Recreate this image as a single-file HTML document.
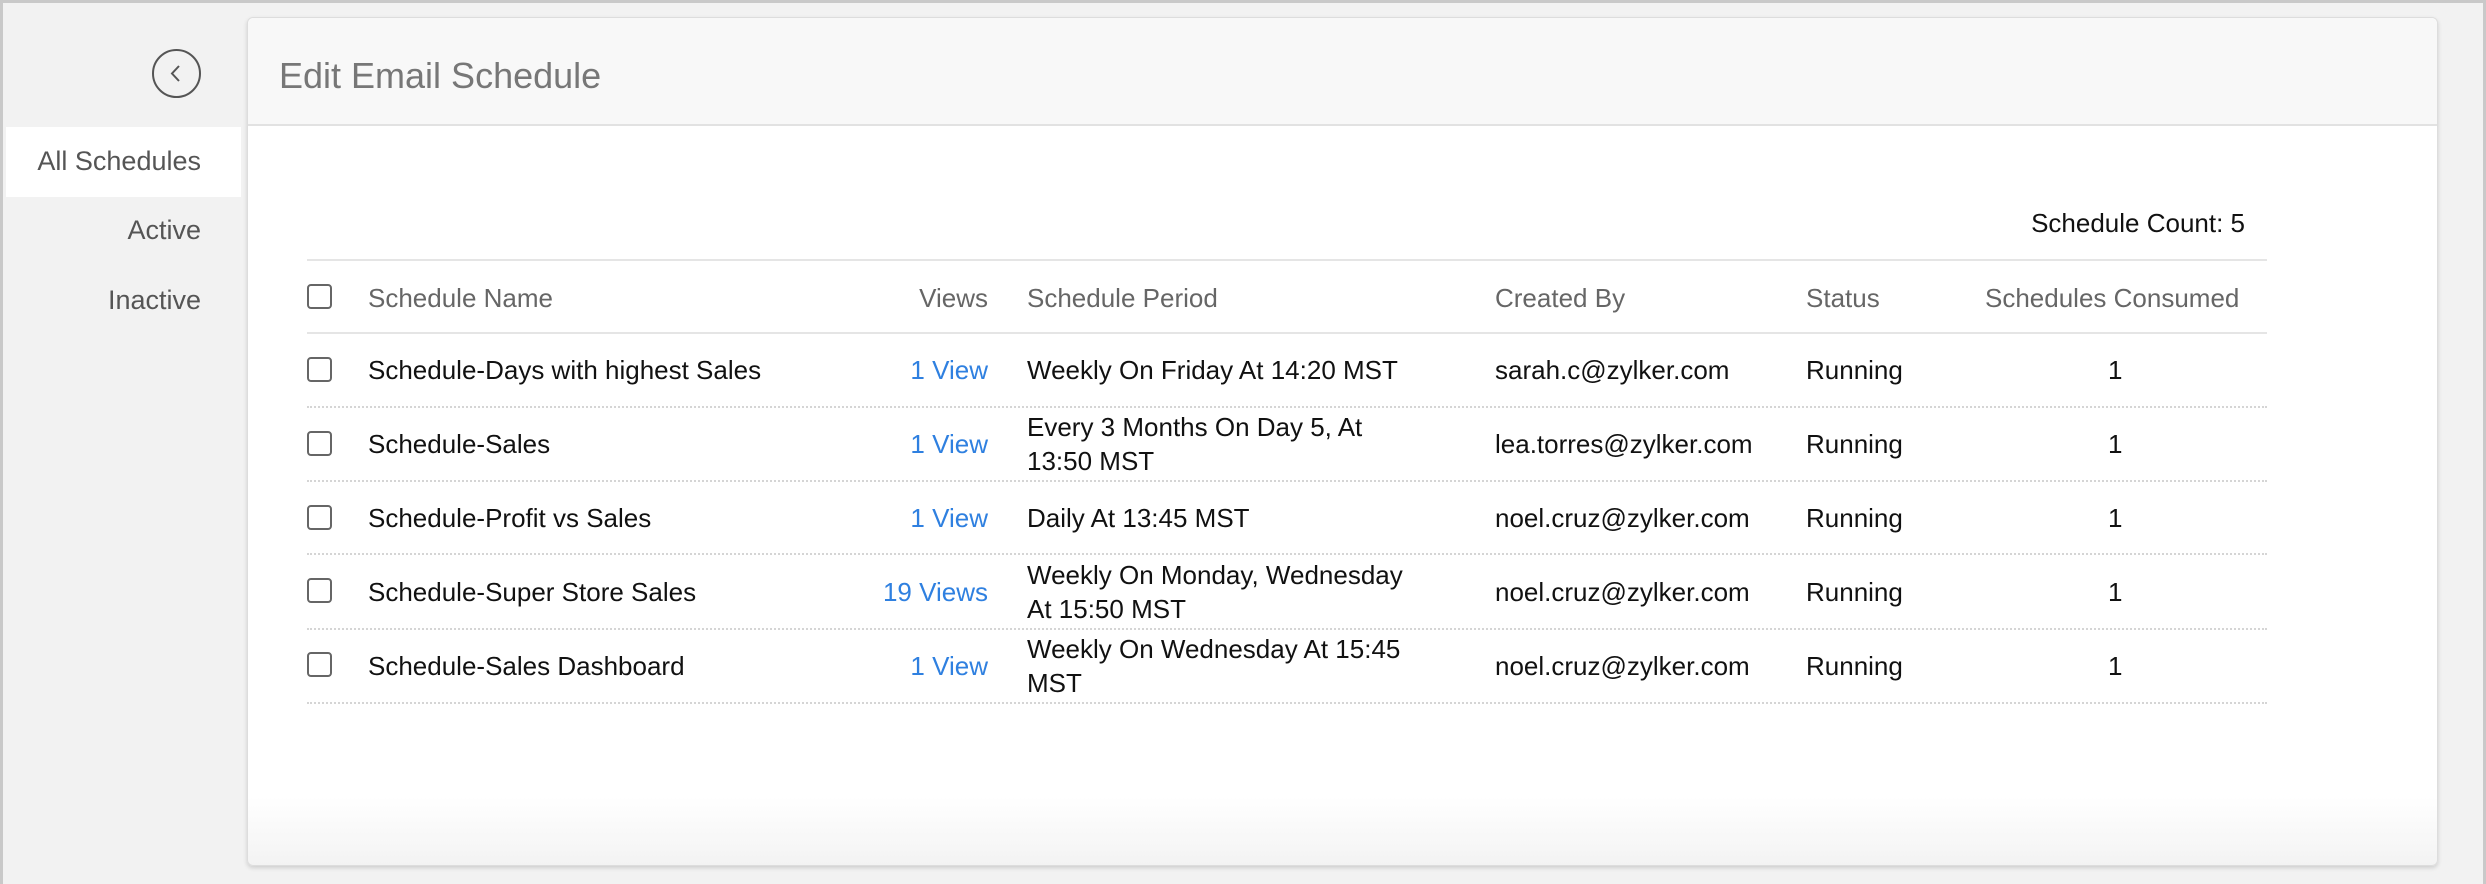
<!DOCTYPE html>
<html><head><meta charset="utf-8"><style>
*{margin:0;padding:0;box-sizing:border-box}
html,body{width:2486px;height:884px;overflow:hidden;background:#f2f2f2;font-family:"Liberation Sans",sans-serif}
.frame{position:absolute;left:0;top:0;width:2486px;height:884px;border:3px solid #c9c9c9;border-bottom:none}
.back{position:absolute;left:152px;top:49px;width:49px;height:49px;border:2px solid #555;border-radius:50%}
.side{position:absolute;right:2285px;font-size:27px;color:#555;text-align:right}
.sel{position:absolute;left:6px;top:127px;width:235px;height:70px;background:#fff}
.card{position:absolute;left:247px;top:17px;width:2191px;height:849px;background:linear-gradient(#fff 92%,#f3f3f3);border:1px solid #ddd;border-radius:6px;box-shadow:0 2px 4px rgba(0,0,0,.15)}
.hdr{position:absolute;left:0;top:0;width:100%;height:108px;background:#f8f8f8;border-bottom:2px solid #e2e2e2;border-radius:6px 6px 0 0}
.title{position:absolute;left:31px;top:37px;font-size:36px;color:#777}
.t{position:absolute;font-size:26px;color:#111;white-space:nowrap;line-height:34px}
.h{color:#666}
.l{position:absolute;left:307px;width:1960px;border-top:2px solid #e5e5e5}
.d{position:absolute;left:307px;width:1960px;border-top:2px dotted #d5d5d5}
.cb{position:absolute;left:307px;width:25px;height:25px;border:2px solid #666;border-radius:4px;background:#fff}
.v{color:#2f80e0}
</style></head><body>
<div class="frame"></div>
<div class="back"><svg width="45" height="45" viewBox="0 0 45 45" style="position:absolute;left:0;top:0"><path d="M25 15 L18 22.5 L25 30" fill="none" stroke="#555" stroke-width="2"/></svg></div>
<div class="sel"></div>
<div class="side" style="top:146px">All Schedules</div>
<div class="side" style="top:215px">Active</div>
<div class="side" style="top:285px">Inactive</div>
<div class="card"><div class="hdr"><div class="title">Edit Email Schedule</div></div></div>

<div class="t" style="right:241px;top:206px">Schedule Count: 5</div>
<div class="l" style="top:259px"></div>
<div class="cb" style="top:284px"></div>
<div class="t h" style="left:368px;top:281px">Schedule Name</div>
<div class="t h" style="right:1498px;top:281px">Views</div>
<div class="t h" style="left:1027px;top:281px">Schedule Period</div>
<div class="t h" style="left:1495px;top:281px">Created By</div>
<div class="t h" style="left:1806px;top:281px">Status</div>
<div class="t h" style="left:1985px;top:281px">Schedules Consumed</div>
<div class="l" style="top:332px"></div>

<div class="cb" style="top:357px"></div>
<div class="t" style="left:368px;top:353px">Schedule-Days with highest Sales</div>
<div class="t v" style="right:1498px;top:353px">1 View</div>
<div class="t" style="left:1027px;top:353px">Weekly On Friday At 14:20 MST</div>
<div class="t" style="left:1495px;top:353px">sarah.c@zylker.com</div>
<div class="t" style="left:1806px;top:353px">Running</div>
<div class="t" style="left:2108px;top:353px">1</div>
<div class="d" style="top:406px"></div>

<div class="cb" style="top:431px"></div>
<div class="t" style="left:368px;top:427px">Schedule-Sales</div>
<div class="t v" style="right:1498px;top:427px">1 View</div>
<div class="t" style="left:1027px;top:410px">Every 3 Months On Day 5, At<br>13:50 MST</div>
<div class="t" style="left:1495px;top:427px">lea.torres@zylker.com</div>
<div class="t" style="left:1806px;top:427px">Running</div>
<div class="t" style="left:2108px;top:427px">1</div>
<div class="d" style="top:480px"></div>

<div class="cb" style="top:505px"></div>
<div class="t" style="left:368px;top:501px">Schedule-Profit vs Sales</div>
<div class="t v" style="right:1498px;top:501px">1 View</div>
<div class="t" style="left:1027px;top:501px">Daily At 13:45 MST</div>
<div class="t" style="left:1495px;top:501px">noel.cruz@zylker.com</div>
<div class="t" style="left:1806px;top:501px">Running</div>
<div class="t" style="left:2108px;top:501px">1</div>
<div class="d" style="top:553px"></div>

<div class="cb" style="top:578px"></div>
<div class="t" style="left:368px;top:575px">Schedule-Super Store Sales</div>
<div class="t v" style="right:1498px;top:575px">19 Views</div>
<div class="t" style="left:1027px;top:558px">Weekly On Monday, Wednesday<br>At 15:50 MST</div>
<div class="t" style="left:1495px;top:575px">noel.cruz@zylker.com</div>
<div class="t" style="left:1806px;top:575px">Running</div>
<div class="t" style="left:2108px;top:575px">1</div>
<div class="d" style="top:628px"></div>

<div class="cb" style="top:652px"></div>
<div class="t" style="left:368px;top:649px">Schedule-Sales Dashboard</div>
<div class="t v" style="right:1498px;top:649px">1 View</div>
<div class="t" style="left:1027px;top:632px">Weekly On Wednesday At 15:45<br>MST</div>
<div class="t" style="left:1495px;top:649px">noel.cruz@zylker.com</div>
<div class="t" style="left:1806px;top:649px">Running</div>
<div class="t" style="left:2108px;top:649px">1</div>
<div class="d" style="top:702px"></div>
</body></html>
